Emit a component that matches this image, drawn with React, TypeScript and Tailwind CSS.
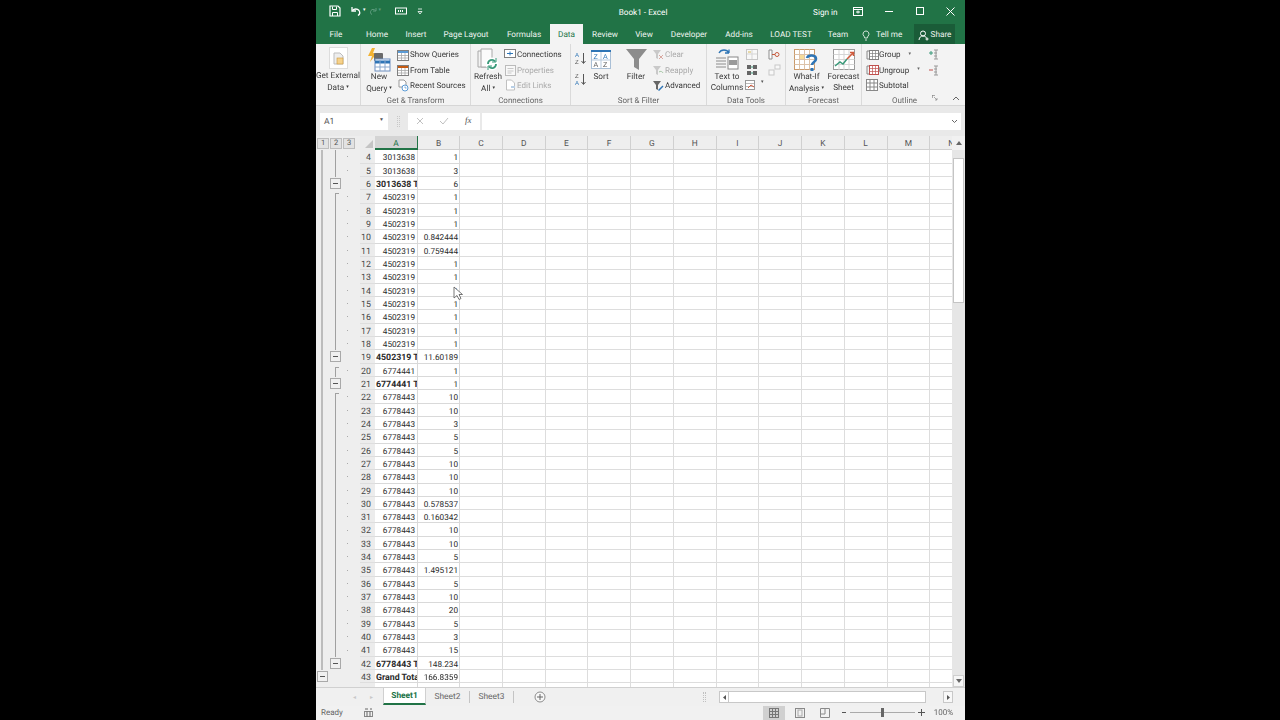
import React from "react";

type R = { n: number; a: string; b: string; bold?: boolean; box?: boolean; top?: boolean; tick?: boolean };
const det = (n: number, a: string, b: string, tick?: boolean): R => ({ n, a, b, tick });
const rows: R[] = [
  det(4, "3013638", "1"), det(5, "3013638", "3"), { n: 6, a: "3013638 Total", b: "6", bold: true, box: true },
  det(7, "4502319", "1", true), det(8, "4502319", "1"), det(9, "4502319", "1"), det(10, "4502319", "0.842444"), det(11, "4502319", "0.759444"),
  det(12, "4502319", "1"), det(13, "4502319", "1"), det(14, "4502319", "1"), det(15, "4502319", "1"), det(16, "4502319", "1"), det(17, "4502319", "1"), det(18, "4502319", "1"),
  { n: 19, a: "4502319 Total", b: "11.60189", bold: true, box: true },
  det(20, "6774441", "1", true), { n: 21, a: "6774441 Total", b: "1", bold: true, box: true },
  det(22, "6778443", "10", true), det(23, "6778443", "10"), det(24, "6778443", "3"), det(25, "6778443", "5"), det(26, "6778443", "5"), det(27, "6778443", "10"), det(28, "6778443", "10"), det(29, "6778443", "10"),
  det(30, "6778443", "0.578537"), det(31, "6778443", "0.160342"), det(32, "6778443", "10"), det(33, "6778443", "10"), det(34, "6778443", "5"), det(35, "6778443", "1.495121"),
  det(36, "6778443", "5"), det(37, "6778443", "10"), det(38, "6778443", "20"), det(39, "6778443", "5"), det(40, "6778443", "3"), det(41, "6778443", "15"),
  { n: 42, a: "6778443 Total", b: "148.234", bold: true, box: true },
  { n: 43, a: "Grand Total", b: "166.8359", bold: true, top: true },
];
const cols = ["C", "D", "E", "F", "G", "H", "I", "J", "K", "L", "M"];

function Minus({ className = "" }: { className?: string }) {
  return (
    <div className={"flex h-[11px] w-[11px] shrink-0 items-center justify-center border border-[#a9a9a9] bg-[#f0f0f0] " + className}>
      <div className="h-px w-[5px] bg-[#555]" />
    </div>
  );
}

function Row({ r }: { r: R }) {
  return (
    <div className="flex h-[13.33px] text-[8.2px] leading-[16px] text-[#2a2a2a]">
      <div className="flex w-[13px] justify-center bg-[#eeeeee]">
        {r.top ? <Minus className="mt-px" /> : <div className="ml-[-1px] mr-[1px] w-[2px] bg-[#bcbcbc]" />}
      </div>
      <div className="flex w-[13px] justify-center bg-[#eeeeee]">
        {r.top ? null : r.box ? <Minus className="mt-px" /> : r.tick ? <div className="ml-[3px] mt-[3px] w-[4px] border-l border-t border-[#a0a0a0]" /> : <div className="w-px bg-[#a0a0a0]" />}
      </div>
      <div className="flex w-[18px] items-center bg-[#eeeeee] pl-[5px]">
        {!r.box && !r.top && <div className="h-px w-px bg-[#aaaaaa]" />}
      </div>
      <div className="w-[15px] border-b border-[#dedede] bg-[#ececec] pr-[4px] text-right text-[8.8px] text-[#444]">{r.n}</div>
      <div className={"w-[43px] overflow-hidden whitespace-nowrap border-b border-r border-[#d9d9d9] " + (r.bold ? "pl-px text-[8.8px] font-bold" : "pr-[2px] text-right")}>{r.a}</div>
      <div className="w-[42px] whitespace-nowrap border-b border-r border-[#d9d9d9] pr-[1px] text-right">{r.b}</div>
      {cols.map((c) => <div key={c} className="w-[42.75px] border-b border-r border-[#dddddd]" />)}
      <div className="flex-1 border-b border-[#dddddd]" />
    </div>
  );
}

function Group({ w, label, children, last }: { w: string; label: string; children: React.ReactNode; last?: boolean }) {
  return (
    <div className={w + " flex h-full shrink-0 flex-col " + (last ? "" : "border-r border-[#dadada]")}>
      <div className="flex h-[52px] items-start">{children}</div>
      <div className="flex h-[9px] items-center justify-center text-[8px] text-[#666]">{label}</div>
    </div>
  );
}

function Big({ w, icon, l1, l2, caret }: { w: string; icon: React.ReactNode; l1: string; l2: string; caret?: boolean }) {
  return (
    <div className={w + " flex shrink-0 flex-col items-center text-[8.2px] leading-[11px] text-[#3a3a3a]"}>
      <div className="flex h-[25px] items-center justify-center">{icon}</div>
      <div>{l1}</div>
      <div className="whitespace-nowrap">{l2}{caret && <span className="ml-[2px] align-middle text-[5px]">▾</span>}</div>
    </div>
  );
}

function Small({ icon, t, off, caret, gap }: { icon: React.ReactNode; t: string; off?: boolean; caret?: boolean; gap?: string }) {
  return (
    <div className={"flex h-[15.4px] items-center gap-[1px] whitespace-nowrap text-[8px] " + (off ? "text-[#aaaaaa]" : "text-[#3a3a3a]")}>
      <div className="flex w-[12px] shrink-0 justify-center">{icon}</div>
      <span className="mt-[1px]">{t}</span>
      {caret && <span className={gap + " text-[5px] text-[#666]"}>▾</span>}
    </div>
  );
}

const S = ({ w, h, children, className = "" }: { w: number; h: number; children: React.ReactNode; className?: string }) => (
  <svg width={w} height={h} viewBox={`0 0 ${w} ${h}`} fill="none" className={"block shrink-0 " + className}>{children}</svg>
);

const Table = ({ head = "#5b9bd5" }: { head?: string }) => (
  <S w={12} h={12}>
    <rect x=".5" y="1.5" width="11" height="10" fill="#fff" stroke="#7f7f7f" />
    <rect x="1" y="2" width="10" height="2" fill={head} />
    <path d="M1 6.5h10M1 9h10M4.5 4v7M8 4v7" stroke="#a8a8a8" strokeWidth=".8" />
  </S>
);
const GroupIc = ({ c = "#7f7f7f" }: { c?: string }) => (
  <S w={13} h={12}>
    <rect x="3.5" y="1.5" width="9" height="9" fill="#fff" stroke={c} />
    <path d="M3.5 4.5h9M3.5 7.5h9M6.5 1.5v9M9.5 1.5v9" stroke={c} strokeWidth=".7" />
    <path d="M3 2H1v8h2" stroke="#888" />
  </S>
);

export default function App() {
  return (
    <div className="flex h-[720px] w-full justify-start overflow-hidden bg-black pl-[316px]">
      <div className="relative flex h-[720px] w-[649px] flex-col bg-[#f1f1f1] font-['Roboto','Noto_Sans',sans-serif] blur-[0.4px] [text-rendering:geometricPrecision]">
        {/* title bar */}
        <div className="flex h-[24px] items-center bg-[#217346] pb-[2px] text-[8.2px] text-white">
          <S w={12} h={12} className="ml-[13px]">
            <path d="M1 1h8l2 2v8H1z" stroke="#fff" strokeWidth="1.2" />
            <path d="M3.5 1.5v3h4v-3M3.5 11V7.5h5V11" stroke="#fff" />
          </S>
          <S w={13} h={12} className="ml-[8px]">
            <path d="M3 2v4h4" stroke="#fff" strokeWidth="1.3" />
            <path d="M3.5 5.5C5 3.5 8.5 3.5 10 5.5c1.3 2 .5 4-1 5" stroke="#fff" strokeWidth="1.3" />
          </S>
          <span className="ml-[1px] text-[5px]">▾</span>
          <S w={10} h={10} className="ml-[2px]">
            <path d="M8 2v3H5M7.5 4.5C6 3 4 3 3 4.5 2 6 2.5 8 4 8.5" stroke="#5f9d7e" />
          </S>
          <span className="ml-[1px] text-[5px] text-[#5f9d7e]">▾</span>
          <S w={12} h={8} className="ml-[14px]">
            <rect x=".5" y="1" width="11" height="6" stroke="#fff" />
            <path d="M3 4h6" stroke="#fff" strokeDasharray="1 1" strokeWidth="2" />
          </S>
          <S w={6} h={7} className="ml-[10px]">
            <path d="M1 1h4M1 3.5h4L3 6z" stroke="#fff" strokeWidth=".8" />
          </S>
          <div className="w-[180px] shrink-0" />
          <div className="mt-[4px] w-[80px] shrink-0 whitespace-nowrap text-center">Book1 - Excel</div>
          <div className="w-[130px] shrink-0" />
          <span className="mt-[4px] whitespace-nowrap">Sign in</span>
          <S w={10} h={9} className="ml-[15px]">
            <rect x=".5" y=".5" width="9" height="8" stroke="#fff" />
            <path d="M1 2.5h8M3 5h4M5 3.5v3" stroke="#fff" />
          </S>
          <div className="ml-[22px] h-px w-[8px] bg-white" />
          <div className="ml-[23px] h-[8px] w-[8px] border border-white" />
          <S w={9} h={9} className="ml-[22px]">
            <path d="M.5.5l8 8M8.5.5l-8 8" stroke="#fff" />
          </S>
        </div>
        {/* tabs */}
        <div className="flex h-[20px] items-stretch bg-[#217346] text-[8.2px] text-[#eef5f1]">
          {[["File","w-[40px]"],["Home","w-[42px]"],["Insert","w-[36px]"],["Page Layout","w-[64px]"],["Formulas","w-[52px]"]].map(([t,w]) => (
            <div key={t} className={w + " flex items-center justify-center whitespace-nowrap pt-[2px]"}>{t}</div>
          ))}
          <div className="flex w-[33px] items-center justify-center bg-[#f3f3f3] pt-[2px] text-[#217346]">Data</div>
          {[["Review","w-[44px]"],["View","w-[34px]"],["Developer","w-[56px]"],["Add-ins","w-[44px]"],["LOAD TEST","w-[60px]"],["Team","w-[34px]"]].map(([t,w]) => (
            <div key={t} className={w + " flex items-center justify-center whitespace-nowrap pt-[2px]"}>{t}</div>
          ))}
          <div className="flex w-[59px] items-center pl-[7px] pt-[2px]">
            <S w={8} h={11}>
              <path d="M4 1a3 3 0 0 1 2 5.2c-.5.6-.7 1-.7 1.8H2.7c0-.8-.2-1.2-.7-1.8A3 3 0 0 1 4 1zM3 10h2" stroke="#fff" strokeWidth=".8" />
            </S>
            <span className="ml-[6px] whitespace-nowrap">Tell me</span>
          </div>
          <div className="flex w-[41px] items-center justify-center gap-[2px] bg-[#1a5c38] pt-[2px]">
            <S w={11} h={11}>
              <circle cx="5" cy="3.5" r="2.5" stroke="#fff" />
              <path d="M1 10c.3-3 2-4 4-4s3 1 3.5 2M9 7.5v3M7.5 9h3" stroke="#fff" />
            </S>
            <span>Share</span>
          </div>
        </div>
        {/* ribbon */}
        <div className="flex h-[62px] shrink-0 border-b border-[#d6d6d6] bg-[#f3f3f3]">
          <Group w="w-[45px]" label="">
            <div className="flex w-full flex-col items-center pt-[3px] text-[8.2px] leading-[11px] text-[#3a3a3a]">
              <div className="flex h-[22px] w-[19px] items-center justify-center border border-[#dddddd] bg-white">
                <S w={11} h={13}><path d="M1 1h6l3 3v8H1z" fill="#eeeeee" stroke="#bdbdbd" /><rect x="4" y="6" width="6" height="6" fill="#f6d28b" stroke="#c9963c" strokeWidth=".6" /></S>
              </div>
              <div className="mt-[2px] whitespace-nowrap">Get External</div>
              <div className="whitespace-nowrap">Data <span className="align-middle text-[5px]">▾</span></div>
            </div>
          </Group>
          <Group w="w-[110px]" label="Get & Transform">
            <div className="flex w-full pl-[1px] pt-[3px]">
              <Big w="w-[34px]" l1="New" l2="Query" caret icon={
                <S w={24} h={24}>
                  <path d="M5 0L1 8h4l-2 6 7-9H6l2-5z" fill="#f2b233" />
                  <rect x="7" y="5" width="9" height="8" rx="1" fill="#6a6a6a" />
                  <rect x="8" y="11" width="15" height="12" fill="#fff" stroke="#6c8ebf" />
                  <path d="M8 14h15" stroke="#2e75b6" strokeWidth="3" />
                  <path d="M8 19h15M13 12v11M18 12v11" stroke="#8aa8cc" />
                </S>} />
              <div className="ml-[1px] flex flex-col">
                <Small icon={<Table head="#5b9bd5" />} t="Show Queries" />
                <Small icon={<Table head="#c55a11" />} t="From Table" />
                <Small icon={<S w={12} h={13}><path d="M2 1h5l2 2v5H2z" fill="#fff" stroke="#999" /><circle cx="8" cy="9" r="3" fill="#fff" stroke="#5b9bd5" /><path d="M8 7.5V9h1.5" stroke="#5b9bd5" strokeWidth=".8" /></S>} t="Recent Sources" />
              </div>
            </div>
          </Group>
          <Group w="w-[100px]" label="Connections">
            <div className="flex w-full pl-[1px] pt-[3px]">
              <Big w="w-[32px]" l1="Refresh" l2="All" caret icon={
                <S w={22} h={24}>
                  <path d="M1 3h12v16H1z" fill="#f3f3f3" stroke="#a8a8a8" />
                  <path d="M4 1h11v18H4z" fill="#fbfbfb" stroke="#a8a8a8" />
                  <circle cx="15" cy="16" r="6.5" fill="#fff" />
                  <path d="M11 16a4 4 0 0 1 7-2.7M19 16a4 4 0 0 1-7 2.7" stroke="#3a9a7a" strokeWidth="1.8" />
                  <path d="M19 10v4h-4M11 22v-4h4" stroke="#3a9a7a" strokeWidth="1" />
                </S>} />
              <div className="flex flex-col">
                <Small icon={<S w={12} h={11}><rect x=".5" y=".5" width="11" height="8" fill="#fff" stroke="#7f7f7f" /><path d="M3 4.5h6M6 2.5v4" stroke="#2e75b6" /></S>} t="Connections" />
                <Small off icon={<S w={11} h={11}><rect x=".5" y=".5" width="10" height="10" fill="#f8f8f8" stroke="#bbb" /><path d="M2.5 3.5h6M2.5 6h6M2.5 8h4" stroke="#c8c8c8" /></S>} t="Properties" />
                <Small off icon={<S w={11} h={12}><path d="M1.5 1h5l3 3v7h-8z" fill="#fff" stroke="#c0c0c0" /><path d="M6 8h4" stroke="#b8cfe6" strokeWidth="2" /></S>} t="Edit Links" />
              </div>
            </div>
          </Group>
          <Group w="w-[136px]" label="Sort & Filter">
            <div className="flex w-full pt-[3px]">
              <div className="ml-[4px] flex w-[11px] shrink-0 flex-col gap-[7px] pt-[4px]">
                <S w={12} h={14}><text x="0" y="6" fontSize="6" fill="#2e75b6" fontFamily="Liberation Sans">A</text><text x="0" y="13" fontSize="6" fill="#555" fontFamily="Liberation Sans">Z</text><path d="M8.5 2v10M6.5 10l2 2.5 2-2.5" stroke="#555" /></S>
                <S w={12} h={14}><text x="0" y="6" fontSize="6" fill="#555" fontFamily="Liberation Sans">Z</text><text x="0" y="13" fontSize="6" fill="#2e75b6" fontFamily="Liberation Sans">A</text><path d="M8.5 2v10M6.5 10l2 2.5 2-2.5" stroke="#555" /></S>
              </div>
              <Big w="w-[30px]" l1="Sort" l2=" " icon={
                <S w={20} h={19}>
                  <rect x=".5" y=".5" width="19" height="18" fill="#fff" stroke="#a9bfd6" />
                  <path d="M0 1h20" stroke="#2e75b6" strokeWidth="2" />
                  <path d="M10 2v16M1 10h18" stroke="#b7c9dc" />
                  <text x="2.5" y="9" fontSize="7" fill="#2e75b6" fontFamily="Liberation Sans">Z</text>
                  <text x="12" y="9" fontSize="7" fill="#2e75b6" fontFamily="Liberation Sans">A</text>
                  <text x="2.5" y="17" fontSize="7" fill="#555" fontFamily="Liberation Sans">A</text>
                  <text x="12" y="17" fontSize="7" fill="#555" fontFamily="Liberation Sans">Z</text>
                </S>} />
              <Big w="w-[40px]" l1="Filter" l2=" " icon={
                <S w={21} h={23}><path d="M0 1h21l-8 10v11l-5-3v-8z" fill="#8c8c8c" /></S>} />
              <div className="ml-[-4px] flex flex-col">
                <Small off icon={<S w={12} h={11}><path d="M1 1h8L6 5v5L4 9V5z" fill="#c9c9c9" /><path d="M7 6l4 4M11 6l-4 4" stroke="#d8a8a0" /></S>} t="Clear" />
                <Small off icon={<S w={12} h={11}><path d="M1 1h8L6 5v5L4 9V5z" fill="#c9c9c9" /><path d="M7 7a2.5 2.5 0 0 1 4 1" stroke="#a6c7a6" /></S>} t="Reapply" />
                <Small icon={<S w={12} h={11}><path d="M1 1h8L6 5v5L4 9V5z" fill="#666" /><path d="M6.5 10.5l4.5-4.5" stroke="#2e75b6" strokeWidth="1.5" /></S>} t="Advanced" />
              </div>
            </div>
          </Group>
          <Group w="w-[79px]" label="Data Tools">
            <div className="flex w-full pt-[3px]">
              <Big w="w-[40px]" l1="Text to" l2="Columns" icon={
                <S w={24} h={24}>
                  <path d="M4 5c2-4 8-4 10 0M14 5V1.5M14 5h-4" stroke="#2e75b6" strokeWidth="1.3" />
                  <path d="M1 10h10M1 13h10M1 16h10M1 19h10" stroke="#8c8c8c" />
                  <rect x="13" y="9" width="10" height="12" fill="#fff" stroke="#888" />
                  <rect x="14" y="12" width="8" height="5" fill="#9a9a9a" />
                </S>} />
              <div className="ml-[-2px] flex w-[13px] shrink-0 flex-col items-center gap-[4px] pt-[2px]">
                <S w={12} h={11}><rect x=".5" y=".5" width="11" height="10" fill="#f8f8f8" stroke="#c6c6c6" /><path d="M6 1v9M1 5h10" stroke="#d5d5d5" /><rect x="2" y="2" width="3" height="2" fill="#e8d9a8" /></S>
                <S w={12} h={12}><path d="M1 1h4v4H1zM7 1h4v4H7zM1 7h4v4H1zM7 7h4v4H7z" fill="#666" /><path d="M5 3h2M5 9h2" stroke="#3a9a7a" /></S>
                <S w={14} h={11}><rect x=".5" y=".5" width="9" height="9" fill="#fff" stroke="#999" /><path d="M1 3.5h8M1 6.5h8" stroke="#bbb" /><path d="M3 8l3-3 3 2" stroke="#d05a3c" /></S>
              </div>
              <span className="ml-[3px] mt-[32px] text-[5px] text-[#555]">▾</span>
              <div className="ml-[4px] flex w-[13px] shrink-0 flex-col items-center gap-[4px] pt-[2px]">
                <S w={13} h={11}><path d="M1 1h3v9H1z" fill="#fff" stroke="#8c8c8c" /><circle cx="9" cy="5.5" r="2" stroke="#c55a3c" /><path d="M4 5.5h3" stroke="#c55a3c" /></S>
                <S w={13} h={13}><rect x="7" y="1" width="5" height="4" fill="#f8f8f8" stroke="#c8c8c8" /><rect x="1" y="6" width="5" height="5" fill="#f8f8f8" stroke="#c8c8c8" /></S>
              </div>
            </div>
          </Group>
          <Group w="w-[76px]" label="Forecast">
            <div className="flex w-full pt-[3px]">
              <Big w="w-[41px]" l1="What-If" l2="Analysis" caret icon={
                <S w={26} h={24}>
                  <rect x=".5" y="1.5" width="20" height="20" fill="#fff" stroke="#c99a6b" />
                  <path d="M.5 6.5h20M.5 11.5h20M.5 16.5h20M5.5 1.5v20M10.5 1.5v20M15.5 1.5v20" stroke="#dcc2a8" />
                  <rect x="6" y="7" width="4" height="4" fill="#f6dc9a" />
                  <path d="M13 10c1-3.5 9-3.5 9 1 0 3-4 3-4 6" stroke="#2e75b6" strokeWidth="2.6" />
                  <rect x="16.5" y="20" width="3" height="3" fill="#2e75b6" />
                </S>} />
              <Big w="w-[33px]" l1="Forecast" l2="Sheet" icon={
                <S w={22} h={22}>
                  <rect x=".5" y=".5" width="21" height="20" fill="#fff" stroke="#9a9a9a" />
                  <path d="M.5 5.5h21M.5 10.5h21M.5 15.5h21M6 1v20M11 1v20M16 1v20" stroke="#d5d5d5" />
                  <path d="M2 17l5-4 3 2 4-5" stroke="#3a9a7a" strokeWidth="1.5" />
                  <path d="M14 10l6-6M17 3.5h3.5V7" stroke="#d05a3c" strokeWidth="1.5" />
                </S>} />
            </div>
          </Group>
          <Group w="w-[85px]" label="Outline" last>
            <div className="flex w-full pl-[4px] pt-[3px]">
              <div className="flex w-[58px] flex-col">
                <Small icon={<GroupIc />} t="Group" caret gap="ml-[7px]" />
                <Small icon={<GroupIc c="#c0504d" />} t="Ungroup" caret gap="ml-[7px]" />
                <Small icon={<S w={12} h={12}><rect x=".5" y=".5" width="11" height="11" fill="#fff" stroke="#888" /><path d="M4 1v10M8 1v10M1 4h10M1 8h10" stroke="#888" /></S>} t="Subtotal" />
              </div>
              <div className="ml-[4px] flex flex-col gap-[5px] pt-[2px]">
                <S w={11} h={11}><path d="M6 1h4M8 1v9M6 10h4M6 4h3M6 7h3" stroke="#999" /><path d="M1 4h4M3 2v4" stroke="#3a9a7a" /></S>
                <S w={11} h={11}><path d="M6 1h4M8 1v9M6 10h4M6 4h3M6 7h3" stroke="#999" /><path d="M1 5h4" stroke="#c0504d" /></S>
              </div>
            </div>
          </Group>
          <div className="flex flex-1 items-end justify-between pb-[3px] pr-[5px]">
            <S w={6} h={6} className="mb-[1px] ml-[-15px]"><path d="M0 .5h3M.5 0v3M2 2l3 3M5 3v2H3" stroke="#888" strokeWidth=".7" /></S>
            <S w={8} h={5} className="mb-[1px]"><path d="M1 4l3-3 3 3" stroke="#666" /></S>
          </div>
        </div>
        {/* formula bar */}
        <div className="flex h-[30px] shrink-0 items-center bg-[#e9e9e9] px-[4px] text-[8.6px] text-[#555]">
          <div className="flex h-[17px] w-[68px] items-center justify-between bg-white px-[4px]">
            <span className="mt-[3px]">A1</span><span className="text-[5px]">▼</span>
          </div>
          <div className="ml-[9px] mr-[8px] h-[11px] w-[3px] border-x border-dotted border-[#c8c8c8]" />
          <div className="flex h-[17px] w-[72px] items-center bg-white pl-[8px]">
            <S w={8} h={8}><path d="M1 1l6 6M7 1l-6 6" stroke="#c0c0c0" /></S>
            <S w={10} h={8} className="ml-[15px]"><path d="M1 4l3 3 5-6" stroke="#c0c0c0" /></S>
            <span className="ml-[16px] font-['Liberation_Serif',serif] text-[9px] italic">fx</span>
          </div>
          <div className="ml-[2px] flex h-[17px] flex-1 items-center justify-end bg-white pr-[3px]">
            <S w={7} h={5}><path d="M1 1l2.5 2.5L6 1" stroke="#666" /></S>
          </div>
        </div>
        {/* sheet */}
        <div className="flex min-h-0 flex-1">
          <div className="flex w-[636px] shrink-0 flex-col bg-white">
            <div className="flex h-[14.3px] shrink-0 text-[8.4px] leading-[16px] text-[#555]">
              <div className="flex w-[44px] items-center bg-[#ededed] pl-[1px]">
                {["1", "2", "3"].map((n) => (
                  <div key={n} className="mr-px flex h-[11px] w-[12px] items-center justify-center border border-[#bdbdbd] bg-[#e2e2e2] text-[7.5px] leading-none">{n}</div>
                ))}
              </div>
              <div className="flex w-[15px] items-end justify-end bg-[#ececec] pb-[2px] pr-[2px]">
                <S w={8} h={8}><path d="M8 0v8H0z" fill="#c4c4c4" /></S>
              </div>
              <div className="w-[43px] border-b-2 border-r border-[#217346] bg-[#d4d4d4] text-center text-[#217346]">A</div>
              <div className="w-[42px] border-b border-r border-[#d0d0d0] bg-[#eeeeee] text-center">B</div>
              {cols.map((c) => <div key={c} className="w-[42.75px] border-b border-r border-[#d0d0d0] bg-[#eeeeee] text-center">{c}</div>)}
              <div className="flex-1 overflow-hidden whitespace-nowrap border-b border-[#d0d0d0] bg-[#eeeeee] pl-[18px]">N</div>
            </div>
            {rows.map((r) => <Row key={r.n} r={r} />)}
            <div className="flex min-h-0 flex-1">
              <div className="w-[44px] bg-[#eeeeee]" />
              <div className="w-[15px] bg-[#ececec]" />
              <div className="w-[43px] border-r border-[#d9d9d9]" />
              <div className="w-[42px] border-r border-[#d9d9d9]" />
              {cols.map((c) => <div key={c} className="w-[42.75px] border-r border-[#dddddd]" />)}
            </div>
          </div>
          {/* v scrollbar */}
          <div className="flex flex-1 flex-col items-center bg-[#e6e6e6] text-[#666]">
            <div className="flex h-[14px] w-full items-center justify-center bg-[#f1f1f1]"><S w={6} h={4}><path d="M0 4l3-4 3 4z" fill="#666" /></S></div>
            <div className="mt-[8px] h-[145px] w-[11px] border border-[#c4c4c4] bg-white" />
            <div className="flex-1" />
            <div className="flex h-[12px] w-[11px] items-center justify-center border border-[#cfcfcf] bg-[#f6f6f6]"><S w={6} h={4}><path d="M0 0l3 4 3-4z" fill="#666" /></S></div>
          </div>
        </div>
        {/* sheet tabs */}
        <div className="flex h-[19px] shrink-0 items-stretch border-t border-[#d0d0d0] bg-[#f0f0f0] text-[8.4px] text-[#666]">
          <div className="flex w-[67px] items-center justify-end gap-[14px] pr-[10px] text-[6px] text-[#c8c8c8]"><span>◂</span><span>▸</span></div>
          <div className="mb-[1px] flex w-[43px] items-center justify-center border-x border-b-2 border-[#217346] border-x-[#d0d0d0] bg-white pt-[2px] font-bold text-[#217346]">Sheet1</div>
          <div className="flex w-[43px] items-center justify-center"><span>Sheet2</span></div>
          <div className="my-[3px] w-px bg-[#c4c4c4]" />
          <div className="flex w-[43px] items-center justify-center"><span>Sheet3</span></div>
          <div className="my-[3px] w-px bg-[#c4c4c4]" />
          <div className="ml-[20px] flex items-center">
            <S w={12} h={12}><circle cx="6" cy="6" r="5" stroke="#8c8c8c" fill="#f8f8f8" /><path d="M3 6h6M6 3v6" stroke="#666" /></S>
          </div>
          <div className="flex-1" />
          <div className="my-[4px] mr-[13px] w-[3px] border-x border-dotted border-[#c0c0c0]" />
          <div className="my-[3px] flex w-[10px] items-center justify-center border border-[#c8c8c8] bg-white"><S w={3} h={5}><path d="M3 0L0 2.5 3 5z" fill="#555" /></S></div>
          <div className="my-[3px] w-[197px] border-y border-r border-[#c8c8c8] bg-white" />
          <div className="w-[17px]" />
          <div className="my-[3px] mr-[12px] flex w-[10px] items-center justify-center border border-[#c8c8c8] bg-[#f8f8f8]"><S w={3} h={5}><path d="M0 0l3 2.5L0 5z" fill="#555" /></S></div>
        </div>
        {/* status */}
        <div className="flex h-[14px] shrink-0 items-center bg-[#f1f1f1] pb-[1px] text-[8px] text-[#666]">
          <span className="ml-[5px] w-[43px]">Ready</span>
          <S w={9} h={9}><rect x=".5" y="3.5" width="8" height="5" stroke="#888" /><path d="M3 3.5v5M6 3.5v5M1 1h3M6 1h2" stroke="#666" /></S>
          <div className="flex-1" />
          <div className="flex h-[14px] w-[22px] items-center justify-center bg-[#d0d0d0]"><S w={10} h={10}><rect x=".5" y=".5" width="9" height="9" stroke="#777" /><path d="M3.5 1v8M6.5 1v8M1 3.5h8M1 6.5h8" stroke="#777" /></S></div>
          <div className="flex w-[30px] justify-center"><S w={10} h={10}><rect x=".5" y=".5" width="9" height="9" stroke="#888" /><rect x="3" y="2" width="4" height="6" stroke="#aaa" /></S></div>
          <div className="flex w-[20px] justify-center"><S w={10} h={10}><path d="M.5.5h9v9h-9zM1 6h4V1" stroke="#888" /></S></div>
          <div className="ml-[7px] h-px w-[4px] bg-[#555]" />
          <div className="relative ml-[4px] mr-[3px] h-px w-[65px] bg-[#aaaaaa]">
            <div className="absolute left-[31px] top-[-4px] h-[9px] w-[3px] bg-[#666]" />
          </div>
          <S w={7} h={7}><path d="M0 3.5h7M3.5 0v7" stroke="#555" /></S>
          <span className="ml-[9px] mr-[12px] text-[8px]">100%</span>
        </div>
        {/* cursor */}
        <S w={10} h={15} className="absolute left-[137px] top-[286px]">
          <path d="M1 1v11l3-2.5 2 4 2-1-2-4h3.5z" fill="#fff" stroke="#555" strokeWidth=".8" />
        </S>
      </div>
    </div>
  );
}
